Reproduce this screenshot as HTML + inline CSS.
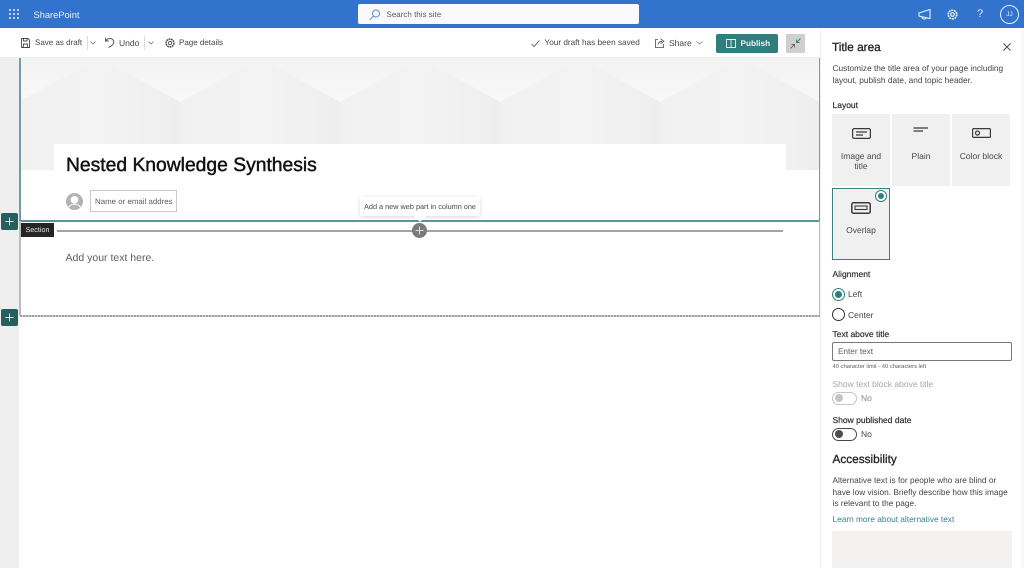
<!DOCTYPE html>
<html lang="en"><head><meta charset="utf-8"><title>SharePoint</title>
<style>
html,body{margin:0;padding:0;width:1024px;height:568px;overflow:hidden;background:#fff}
body{position:relative;font-family:"Liberation Sans",sans-serif;color:#323130;filter:blur(.3px);text-rendering:geometricPrecision}
.a{position:absolute;white-space:nowrap}
.t{position:absolute;white-space:nowrap;font-size:8.5px;line-height:12px;color:#484644}
svg{position:absolute;overflow:visible}
.tile{position:absolute;width:58px;height:72px;background:#f0f0f0;text-align:center;font-size:8.5px;line-height:9.5px;color:#4a4948}
.tile span{position:absolute;left:0;right:0;top:38px}
.lab{position:absolute;white-space:nowrap;font-size:8.5px;line-height:12px;color:#323130;font-weight:400;-webkit-text-stroke:.2px #323130}
</style></head><body>

<!-- top bar -->
<div class="a" style="left:0;top:0;width:1024px;height:28px;background:#3274cd"></div>
<svg style="left:9px;top:9px" width="11" height="11" fill="#e8f0fb"><circle cx="1" cy="1" r="1"/><circle cx="5" cy="1" r="1"/><circle cx="9" cy="1" r="1"/><circle cx="1" cy="5" r="1"/><circle cx="5" cy="5" r="1"/><circle cx="9" cy="5" r="1"/><circle cx="1" cy="9" r="1"/><circle cx="5" cy="9" r="1"/><circle cx="9" cy="9" r="1"/></svg>
<div class="a" style="left:33.5px;top:8px;font-size:9.3px;line-height:14px;color:#e6effa">SharePoint</div>
<div class="a" style="left:358px;top:4px;width:281px;height:20px;background:#fafafa;border-radius:2px"></div>
<svg style="left:369px;top:9px" width="12" height="12" fill="none" stroke="#5b8fd8" stroke-width="1"><circle cx="7" cy="4.500" r="3.500"/><path d="M4.500 7L.8 10.800"/></svg>
<div class="a" style="left:386.5px;top:8px;font-size:8px;line-height:14px;color:#605e5c">Search this site</div>
<svg style="left:918px;top:8px" width="13" height="12" fill="none" stroke="#e8f0fb" stroke-width="1.100"><path d="M1 5L12 1.500V10.500L1 8Z M4 8.500Q4 11 6.500 11 8 11 8.500 9.500"/></svg>
<svg style="left:947px;top:9px" width="11" height="11" fill="none" stroke="#e8f0fb" stroke-width="1.200"><circle cx="5.500" cy="5.500" r="1.800"/><circle cx="5.500" cy="5.500" r="4.300" stroke-width="1.600" stroke-dasharray="2 .7"/></svg>
<div class="a" style="left:977px;top:7px;font-size:11px;line-height:15px;color:#e8f0fb">?</div>
<div class="a" style="left:1000px;top:5px;width:17px;height:17px;border:1px solid #e8f0fb;border-radius:50%;text-align:center;font-size:6.500px;line-height:18px;color:#e8f0fb">JJ</div>

<!-- command bar -->
<svg style="left:21px;top:38px" width="9" height="10" fill="none" stroke="#4a4948" stroke-width=".9"><path d="M.5 .5H7L8.500 2V9.500H.5Z M2.500 .5V3H6V.5 M2.500 9.500V6H6.500V9.500"/></svg>
<div class="t" style="left:35px;top:37px;font-size:8px">Save as draft</div>
<div class="a" style="left:87px;top:36px;width:1px;height:14px;background:#ddd"></div>
<svg style="left:90px;top:41px" width="6" height="4" fill="none" stroke="#777" stroke-width=".8"><path d="M.5 .5L3 3 5.500 .5"/></svg>
<svg style="left:105px;top:37px" width="10" height="11" fill="none" stroke="#4a4948" stroke-width=".9"><path d="M.5 .8V4H3.700 M.7 3.800Q3 .8 6 1.600 9.300 2.800 8.700 6 8 8.500 3.500 10.500"/></svg>
<div class="t" style="left:119px;top:37px;font-size:8.500px">Undo</div>
<div class="a" style="left:144px;top:36px;width:1px;height:14px;background:#ddd"></div>
<svg style="left:148px;top:41px" width="6" height="4" fill="none" stroke="#777" stroke-width=".8"><path d="M.5 .5L3 3 5.500 .5"/></svg>
<svg style="left:165px;top:38px" width="10" height="10" fill="none" stroke="#4a4948" stroke-width=".8"><circle cx="5" cy="5" r="1.600"/><circle cx="5" cy="5" r="3.900" stroke-width="1.500" stroke-dasharray="1.800 .6"/></svg>
<div class="t" style="left:179px;top:37px;font-size:8px">Page details</div>
<svg style="left:531px;top:40px" width="9" height="7" fill="none" stroke="#4a4948" stroke-width=".8"><path d="M.5 4L3 6.500 8.500 .5"/></svg>
<div class="t" style="left:544.500px;top:37px;font-size:8.200px">Your draft has been saved</div>
<svg style="left:655px;top:38px" width="10" height="10" fill="none" stroke="#4a4948" stroke-width=".8"><path d="M3 1.500H.5V9.500H8.500V6 M3 6.500Q3.500 3.500 7 3.300 M5.500 .8L9 3.300 5.500 5.500"/></svg>
<div class="t" style="left:669px;top:37px;font-size:8.500px">Share</div>
<svg style="left:696px;top:41px" width="7" height="4" fill="none" stroke="#777" stroke-width=".8"><path d="M.5 .5L3.500 3 6.500 .5"/></svg>
<div class="a" style="left:716px;top:34px;width:62px;height:19px;background:#317c7d;border-radius:2px"></div>
<svg style="left:726px;top:39px" width="10" height="9" fill="none" stroke="#e4f0f0" stroke-width=".9"><path d="M.5 .5H9.500V8.500H.5Z M5 .5V8.500"/></svg>
<div class="a" style="left:740.500px;top:37px;font-size:8.200px;line-height:13px;color:#e9f4f4;font-weight:700">Publish</div>
<div class="a" style="left:786px;top:34px;width:19px;height:19px;background:#cfcfcd;border-radius:1px"></div>
<svg style="left:790px;top:38px" width="11" height="11" fill="none" stroke="#317c7d" stroke-width=".9"><path d="M10.500 .5L6.500 4.500 M6.500 1.500V4.500H9.500"/><path d="M.5 10.500L4.500 6.500 M1.500 6.500H4.500V9.500" stroke="#666"/></svg>
<div class="a" style="left:0;top:57px;width:820px;height:1px;background:#ececec"></div>

<!-- gutter -->
<div class="a" style="left:0;top:58px;width:19px;height:510px;background:#efefef"></div>

<!-- hero -->
<svg style="left:20px;top:58px" width="800" height="112" viewBox="0 0 800 112">
<defs>
<linearGradient id="g" x1="0" x2="1" y1="0" y2="0"><stop offset="0" stop-color="#f1f1f1"/><stop offset=".5" stop-color="#f3f3f3"/><stop offset="1" stop-color="#eeeeee"/></linearGradient>
<linearGradient id="b" x1="0" x2="0" y1="0" y2="1"><stop offset="0" stop-color="#f3f3f3"/><stop offset=".4" stop-color="#f8f8f8"/></linearGradient>
</defs>
<rect width="800" height="112" fill="url(#b)"/>
<path d="M0 43L80 0 160 44V112H0Z" fill="url(#g)"/>
<path d="M160 44L240 0 320 44V112H160Z" fill="url(#g)"/>
<path d="M320 44L400 0 480 44V112H320Z" fill="url(#g)"/>
<path d="M480 44L560 0 640 44V112H480Z" fill="url(#g)"/>
<path d="M640 44L720 0 800 44V112H640Z" fill="url(#g)"/>
</svg>
<div class="a" style="left:54px;top:144px;width:732px;height:76px;background:#fff"></div>
<div class="a" style="left:66px;top:153px;font-size:19.300px;line-height:25px;color:#111;-webkit-text-stroke:.45px #111">Nested Knowledge Synthesis</div>
<svg style="left:66px;top:192.500px" width="17" height="17" viewBox="0 0 17 17"><circle cx="8.500" cy="8.500" r="8.500" fill="#b3b3b3"/><circle cx="8.500" cy="6.800" r="3.800" fill="#fff"/><path d="M2.500 14.500Q4 11.300 8.500 11.300 13 11.300 14.500 14.500" fill="none" stroke="#fff" stroke-width="1"/></svg>
<div class="a" style="left:90px;top:190px;width:81px;height:20px;border:1px solid #c8c8c8;background:#fff;overflow:hidden;font-size:7.900px;line-height:21px;color:#605e5c;padding-left:4px">Name or email addres</div>

<!-- section borders -->
<div class="a" style="left:19px;top:58px;width:2px;height:163px;background:#6f9fa1"></div>
<div class="a" style="left:819px;top:58px;width:1px;height:163px;background:#6f9fa1"></div>
<div class="a" style="left:19px;top:219.500px;width:801px;height:2px;background:#5f9496"></div>
<div class="a" style="left:19px;top:221px;width:2px;height:95px;background:#bdbdbd"></div>
<div class="a" style="left:819px;top:221px;width:1px;height:95px;background:#bdbdbd"></div>
<div class="a" style="left:20px;top:315px;width:800px;height:2px;background:repeating-linear-gradient(90deg,#9e9e9e 0 2px,#d5d5d5 2px 3px)"></div>

<div class="a" style="left:21px;top:223px;width:33px;height:14px;background:#252525;color:#e5e5e5;font-size:7.200px;line-height:14.500px;text-align:center">Section</div>
<div class="a" style="left:57px;top:230px;width:726px;height:1.500px;background:#a3a3a3"></div>
<div class="a" style="left:412px;top:223px;width:15px;height:15px;border-radius:50%;background:#7a7a7a"></div>
<svg style="left:415px;top:226px" width="9" height="9" stroke="#dcdcdc" stroke-width="1"><path d="M4.500 .5V8.500M.5 4.500H8.500"/></svg>
<div class="a" style="left:360px;top:197px;width:120px;height:19px;background:#fff;box-shadow:0 1px 5px rgba(0,0,0,.16);border-radius:1px;text-align:center;font-size:7.300px;line-height:19.500px;color:#484644">Add a new web part in column one</div>
<svg style="left:414px;top:216px" width="12" height="6"><path d="M0 0H12L6 6Z" fill="#fff"/></svg>

<div class="a" style="left:1px;top:213px;width:17px;height:17px;background:#235f60;border-radius:2px"></div>
<svg style="left:5px;top:217px" width="9" height="9" stroke="#d8e8e8" stroke-width=".9"><path d="M4.500 .5V8.500M.5 4.500H8.500"/></svg>
<div class="a" style="left:1px;top:309px;width:17px;height:17px;background:#235f60;border-radius:2px"></div>
<svg style="left:5px;top:313px" width="9" height="9" stroke="#d8e8e8" stroke-width=".9"><path d="M4.500 .5V8.500M.5 4.500H8.500"/></svg>

<div class="a" style="left:65.500px;top:251px;font-size:10.500px;line-height:15px;color:#605e5c">Add your text here.</div>

<!-- panel -->
<div class="a" style="left:820px;top:28px;width:204px;height:540px;background:#fff;border-left:1px solid #f0f0f0;box-sizing:border-box"></div>
<div class="a" style="left:1019px;top:28px;width:5px;height:540px;background:linear-gradient(90deg,#fff,#f6f6f6)"></div>
<div class="a" style="left:832px;top:39px;font-size:11.800px;line-height:16px;color:#252423;-webkit-text-stroke:.3px #252423">Title area</div>
<svg style="left:1003px;top:43px" width="8" height="8" stroke="#4a4948" stroke-width=".9"><path d="M.5 .5L7.500 7.500M7.500 .5L.5 7.500"/></svg>
<div class="t" style="left:832.500px;top:62px;font-size:8.300px">Customize the title area of your page including</div>
<div class="t" style="left:832.500px;top:73.500px;font-size:8.300px">layout, publish date, and topic header.</div>
<div class="lab" style="left:832.500px;top:99px">Layout</div>

<div class="tile" style="left:832px;top:114px"><span>Image and<br>title</span></div>
<div class="tile" style="left:892px;top:114px"><span>Plain</span></div>
<div class="tile" style="left:952px;top:114px"><span>Color block</span></div>
<div class="tile" style="left:832px;top:188px;box-sizing:border-box;border:1.500px solid #3d7f80"><span style="top:36.500px">Overlap</span></div>
<svg style="left:852px;top:128px" width="19" height="11" fill="none" stroke="#3b3a39" stroke-width="1.200"><rect x=".6" y=".6" width="17.800" height="9.800" rx="1.500"/><path d="M4 4H15M4 7H11"/></svg>
<svg style="left:913px;top:127px" width="16" height="6" fill="none" stroke="#3b3a39" stroke-width="1.200"><path d="M.5 1H15M.5 4H10"/></svg>
<svg style="left:972px;top:128px" width="19" height="11" fill="none" stroke="#3b3a39" stroke-width="1.200"><rect x=".6" y=".6" width="17.800" height="8.800" rx="1"/><circle cx="5.500" cy="5" r="2"/></svg>
<svg style="left:851px;top:202px" width="20" height="12" fill="none" stroke="#3b3a39" stroke-width="1.500"><rect x=".8" y=".8" width="18.400" height="10.400" rx="1.500"/><rect x="4" y="4" width="12" height="3.500" stroke-width="1.100"/></svg>
<div class="a" style="left:875px;top:190px;width:10px;height:10px;border:1.200px solid #2f7d7e;border-radius:50%;background:#fff"></div>
<div class="a" style="left:878px;top:193px;width:6.400px;height:6.400px;border-radius:50%;background:#2f7d7e"></div>

<div class="lab" style="left:832.500px;top:267.500px">Alignment</div>
<div class="a" style="left:832px;top:288px;width:11px;height:11px;border:1px solid #2f7d7e;border-radius:50%"></div>
<div class="a" style="left:835px;top:291px;width:7px;height:7px;border-radius:50%;background:#2f7d7e"></div>
<div class="t" style="left:848px;top:288px">Left</div>
<div class="a" style="left:832px;top:308px;width:11px;height:11px;border:1px solid #323130;border-radius:50%"></div>
<div class="t" style="left:848px;top:309px">Center</div>
<div class="lab" style="left:832.500px;top:328px">Text above title</div>
<div class="a" style="left:832px;top:342px;width:178px;height:17px;border:1px solid #7a7978;border-radius:2px;background:#fff;font-size:8.200px;line-height:18px;color:#605e5c;text-indent:5px">Enter text</div>
<div class="a" style="left:832.500px;top:363px;font-size:5.800px;line-height:9px;color:#605e5c">40 character limit - 40 characters left</div>
<div class="t" style="left:832.500px;top:378px;color:#a8a7a6">Show text block above title</div>
<div class="a" style="left:832px;top:392px;width:23px;height:11px;border:1px solid #c8c6c4;border-radius:7px"></div>
<div class="a" style="left:834.500px;top:394px;width:8px;height:8px;border-radius:50%;background:#c4c4c4"></div>
<div class="t" style="left:861px;top:392px;color:#8a8886">No</div>
<div class="lab" style="left:832.500px;top:414px">Show published date</div>
<div class="a" style="left:832px;top:428px;width:23px;height:11px;border:1px solid #4a4948;border-radius:7px"></div>
<div class="a" style="left:834.500px;top:430px;width:8px;height:8px;border-radius:50%;background:#4f4e4d"></div>
<div class="t" style="left:861px;top:428px">No</div>
<div class="a" style="left:832.500px;top:451px;font-size:11.800px;line-height:16px;color:#252423;-webkit-text-stroke:.3px #252423">Accessibility</div>
<div class="t" style="left:832.500px;top:474px;font-size:8.300px">Alternative text is for people who are blind or</div>
<div class="t" style="left:832.500px;top:485.500px;font-size:8.300px">have low vision. Briefly describe how this image</div>
<div class="t" style="left:832.500px;top:497px;font-size:8.300px">is relevant to the page.</div>
<div class="t" style="left:832.500px;top:513px;font-size:8.300px;color:#3d8485">Learn more about alternative text</div>
<div class="a" style="left:832px;top:531px;width:180px;height:37px;background:#f3f2f1;border-radius:2px 2px 0 0"></div>
</body></html>
